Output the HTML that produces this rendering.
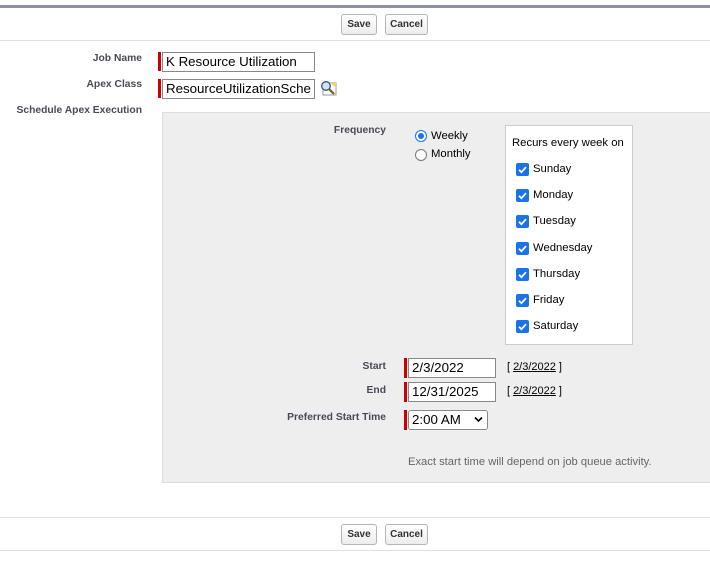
<!DOCTYPE html>
<html><head><style>
body{margin:0;width:710px;height:565px;background:#fff;font-family:"Liberation Sans",Arial,sans-serif;position:relative;overflow:hidden}
.a{position:absolute}
.lbl{position:absolute;font-size:10.3px;font-weight:bold;color:#4a4a56;text-align:right;white-space:nowrap}
.btn{position:absolute;height:19px;border:1px solid #b5b5b5;border-radius:3px;background:linear-gradient(#fff,#ededed);font-size:10px;font-weight:bold;color:#333;text-align:center;line-height:19px;box-sizing:border-box}
.inp{position:absolute;height:20px;border:1px solid #888;background:#fff;font-size:13.3px;line-height:18px;padding-left:3px;box-sizing:border-box;white-space:nowrap;overflow:hidden;color:#000}
.req{position:absolute;width:3px;background:#c00}
.cb{position:absolute;left:516px;width:13px;height:13px;background:#1a73e8;border-radius:2px}
.cb svg{position:absolute;left:0;top:0}
.day{position:absolute;left:533px;font-size:11.3px;color:#000}
.lnk{position:absolute;font-size:11px;color:#000}
.lnk u{margin:0 3px}
</style></head><body>
<div class="a" style="left:0;top:5px;width:710px;height:3px;background:#8d8fa8"></div>
<div class="a" style="left:0;top:40px;width:710px;height:1px;background:#e0e0e0"></div>
<div class="btn" style="left:341px;top:14px;width:36px;height:21px;line-height:19px">Save</div>
<div class="btn" style="left:385px;top:14px;width:43px;height:21px;line-height:19px">Cancel</div>

<div class="lbl" style="right:568px;top:53px">Job Name</div>
<div class="req" style="left:158px;top:52px;height:19px"></div>
<div class="inp" style="left:162px;top:52px;width:153px">K Resource Utilization</div>
<div class="lbl" style="right:568px;top:79px">Apex Class</div>
<div class="req" style="left:158px;top:79px;height:19px"></div>
<div class="inp" style="left:162px;top:79px;width:153px">ResourceUtilizationSche</div>
<svg class="a" style="left:320px;top:80px" width="17" height="16" viewBox="0 0 17 16"><rect x="3" y="3" width="13" height="12" fill="#fff" stroke="#999"/><path d="M10 3h6v5" fill="#f5d66a"/><circle cx="6" cy="6" r="4.3" fill="#cfe3f3" stroke="#2c5a85" stroke-width="1.3"/><path d="M9 9l5 5" stroke="#7a5a2a" stroke-width="2.2"/></svg>
<div class="lbl" style="right:568px;top:105px">Schedule Apex Execution</div>

<div class="a" style="left:162px;top:112px;width:548px;height:371px;background:#eeeeee;border-top:1px solid #ddd;border-bottom:1px solid #ddd;border-left:1px solid #ddd;box-sizing:border-box"></div>
<div class="lbl" style="right:324px;top:125px">Frequency</div>
<div class="a" style="left:415px;top:130px;width:12px;height:12px;border-radius:50%;background:#fff;border:1px solid #1a73e8;box-sizing:border-box"><div class="a" style="left:2px;top:2px;width:6px;height:6px;border-radius:50%;background:#1a73e8"></div></div>
<div class="a" style="left:431px;top:130px;font-size:11.3px">Weekly</div>
<div class="a" style="left:415px;top:149px;width:12px;height:12px;border-radius:50%;background:#fff;border:1px solid #777;box-sizing:border-box"></div>
<div class="a" style="left:431px;top:148px;font-size:11.3px">Monthly</div>

<div class="a" style="left:505px;top:125px;width:128px;height:220px;background:#fff;border:1px solid #ccc;box-sizing:border-box"></div>
<div class="a" style="left:512px;top:137px;font-size:11.3px">Recurs every week on</div>
<div class="cb" style="top:163px"><svg width="13" height="13"><path d="M3 6.8l2.4 2.4L10 4.2" stroke="#fff" stroke-width="1.8" fill="none"/></svg></div><div class="day" style="top:163px">Sunday</div>
<div class="cb" style="top:189px"><svg width="13" height="13"><path d="M3 6.8l2.4 2.4L10 4.2" stroke="#fff" stroke-width="1.8" fill="none"/></svg></div><div class="day" style="top:189px">Monday</div>
<div class="cb" style="top:215px"><svg width="13" height="13"><path d="M3 6.8l2.4 2.4L10 4.2" stroke="#fff" stroke-width="1.8" fill="none"/></svg></div><div class="day" style="top:215px">Tuesday</div>
<div class="cb" style="top:242px"><svg width="13" height="13"><path d="M3 6.8l2.4 2.4L10 4.2" stroke="#fff" stroke-width="1.8" fill="none"/></svg></div><div class="day" style="top:242px">Wednesday</div>
<div class="cb" style="top:268px"><svg width="13" height="13"><path d="M3 6.8l2.4 2.4L10 4.2" stroke="#fff" stroke-width="1.8" fill="none"/></svg></div><div class="day" style="top:268px">Thursday</div>
<div class="cb" style="top:294px"><svg width="13" height="13"><path d="M3 6.8l2.4 2.4L10 4.2" stroke="#fff" stroke-width="1.8" fill="none"/></svg></div><div class="day" style="top:294px">Friday</div>
<div class="cb" style="top:320px"><svg width="13" height="13"><path d="M3 6.8l2.4 2.4L10 4.2" stroke="#fff" stroke-width="1.8" fill="none"/></svg></div><div class="day" style="top:320px">Saturday</div>

<div class="lbl" style="right:324px;top:361px">Start</div>
<div class="req" style="left:404px;top:358px;height:20px"></div>
<div class="inp" style="left:408px;top:358px;width:88px">2/3/2022</div>
<div class="lnk" style="left:507px;top:361px">[<u>2/3/2022</u>]</div>
<div class="lbl" style="right:324px;top:385px">End</div>
<div class="req" style="left:404px;top:382px;height:20px"></div>
<div class="inp" style="left:408px;top:382px;width:88px">12/31/2025</div>
<div class="lnk" style="left:507px;top:385px">[<u>2/3/2022</u>]</div>
<div class="lbl" style="right:324px;top:412px">Preferred Start Time</div>
<div class="req" style="left:404px;top:410px;height:20px"></div>
<div class="inp" style="left:408px;top:410px;width:80px;border-radius:3px">2:00 AM</div>
<svg class="a" style="left:474px;top:416px" width="9" height="7"><path d="M1 1.5l3.5 3.5L8 1.5" stroke="#000" stroke-width="1.6" fill="none"/></svg>
<div class="a" style="left:408px;top:456px;font-size:11.2px;color:#666">Exact start time will depend on job queue activity.</div>

<div class="a" style="left:0;top:517px;width:710px;height:1px;background:#e0e0e0"></div>
<div class="btn" style="left:341px;top:524px;width:36px;height:21px">Save</div>
<div class="btn" style="left:385px;top:524px;width:43px;height:21px">Cancel</div>
<div class="a" style="left:0;top:550px;width:710px;height:1px;background:#e0e0e0"></div>
</body></html>
